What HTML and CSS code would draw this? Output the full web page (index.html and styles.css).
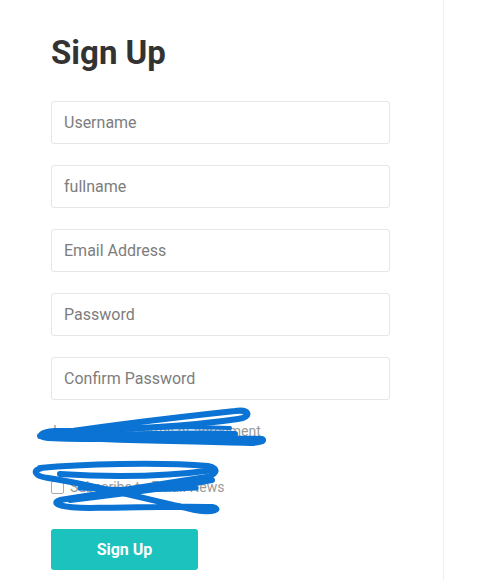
FILE: index.html
```html
<!DOCTYPE html>
<html>
<head>
<meta charset="utf-8">
<link rel="stylesheet" href="styles.css">
</head>
<body>
<div class="page">
  <div class="panel">
    <h1 class="title">Sign Up</h1>
    <form class="form">
      <input class="field" type="text" placeholder="Username">
      <input class="field" type="text" placeholder="fullname">
      <input class="field" type="email" placeholder="Email Address">
      <input class="field" type="password" placeholder="Password">
      <input class="field" type="password" placeholder="Confirm Password">
      <div class="extras">
        <p class="agree">I agree to the terms of agreement</p>
        <label class="check"><span class="box"></span>Subscribe to Email News</label>
        <svg class="scribble" width="240" height="110" viewBox="30 405 240 110" fill="none" stroke="#0a73d3" stroke-linecap="round" stroke-linejoin="round">
          <path d="M40 436 C 90 428, 170 418, 235 411 C 250 409, 252 417, 238 419 C 190 426, 120 430, 55 431 C 40 432, 36 437, 48 438 C 110 441, 200 437, 262 439 C 266 441, 258 443, 250 443 C 180 441, 110 440, 45 437" stroke-width="6"/>
          <path d="M50 434 C 120 436, 190 432, 235 434" stroke-width="6"/>
          <path d="M70 430 C 130 428, 180 426, 230 428" stroke-width="4"/>
          <path d="M40 468 C 80 464, 160 462, 208 466 C 220 468, 218 476, 200 478 C 150 486, 100 494, 60 500 C 50 503, 60 508, 90 508 C 140 507, 185 506, 212 507 C 222 509, 214 513, 195 510 C 150 500, 90 484, 48 478 C 34 476, 32 470, 42 468" stroke-width="6"/>
          <path d="M60 474 C 120 478, 170 476, 214 470" stroke-width="6"/>
          <path d="M70 500 C 120 494, 170 488, 212 480" stroke-width="6"/>
          <path d="M80 488 C 120 490, 160 490, 196 488" stroke-width="5"/>
        </svg>
      </div>
      <button class="submit" type="button">Sign Up</button>
    </form>
  </div>
</div>
</body>
</html>
```
FILE: styles.css
```css
* { box-sizing: border-box; }
html, body { margin: 0; padding: 0; background: #fff; }
body { font-family: Roboto, "Noto Sans", Arial, sans-serif; }
.page { display: flex; height: 580px; }
.panel {
  width: 444px;
  border-right: 1px solid #efefef;
  padding: 33px 0 0 51px;
}
.title {
  margin: 0;
  font-size: 33px;
  line-height: 40px;
  font-weight: 700;
  color: #333;
}
.form {
  margin-top: 28px;
  display: flex;
  flex-direction: column;
  align-items: flex-start;
  gap: 21px;
}
.field {
  width: 339px;
  height: 43px;
  border: 1px solid #e6e6e6;
  border-radius: 3px;
  padding: 0 12px;
  font-family: Roboto, "Noto Sans", Arial, sans-serif;
  font-size: 16px;
  color: #333;
  outline: none;
  background: #fff;
}
.field::placeholder { color: #7d7d7d; }
.extras {
  position: relative;
  width: 339px;
  height: 103px;
  margin-top: -16px;
  font-size: 14px;
  color: #9a9a9a;
}
.agree { margin: 0; position: absolute; left: 2px; top: 18px; }
.check { position: absolute; left: 0; top: 74px; display: flex; align-items: center; gap: 6px; }
.box { width: 13px; height: 13px; border: 1px solid #aaa; border-radius: 2px; }
.scribble { position: absolute; left: -21px; top: 0; }
.submit {
  width: 147px;
  height: 41px;
  border: none;
  border-radius: 3px;
  background: #1bc2be;
  color: #fff;
  font-family: Roboto, "Noto Sans", Arial, sans-serif;
  font-size: 16px;
  font-weight: 700;
}
```
